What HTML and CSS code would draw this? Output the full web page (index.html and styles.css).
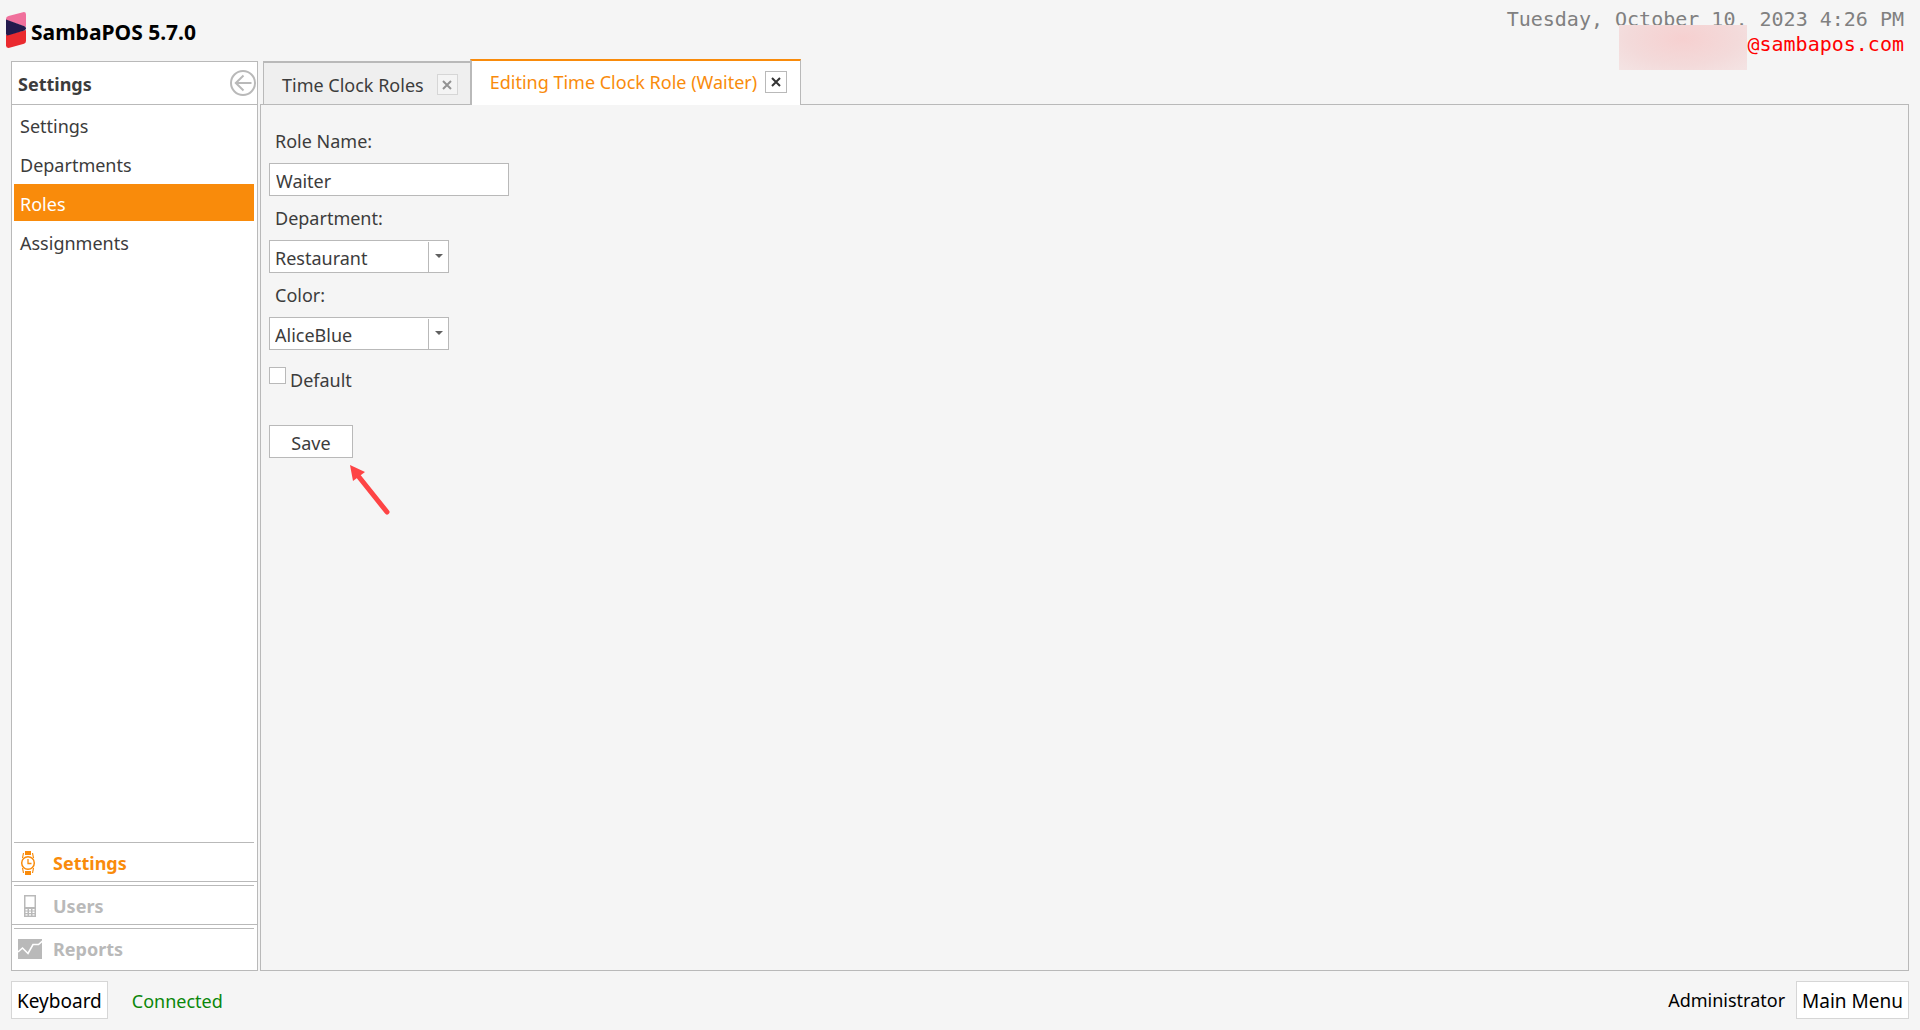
FILE: index.html
```html
<!DOCTYPE html>
<html lang="en">
<head>
<meta charset="utf-8">
<title>SambaPOS 5.7.0</title>
<link rel="stylesheet" href="styles.css">
</head>
<body>
<header class="topbar">
  <div class="brand">
    <svg class="brand-logo" width="20" height="36" viewBox="0 0 20 36" aria-hidden="true">
      <path d="M0 7Q0 4.500 2.500 4L17 .2Q20 -.3 20 2.500V15L0 8Z" fill="#f0709c"/>
      <path d="M0 23L20 18V29Q20 31 18 31.700L3.500 35.800Q0 36.500 0 33.500Z" fill="#ea2a2f"/>
      <path d="M0 7.500L18.500 14.200Q20 15 20 16.200Q20 17.700 18.500 18.400L2.500 23.300Q0 24 0 21.500Z" fill="#231a4c"/>
    </svg>
    <h1 class="brand-name">SambaPOS 5.7.0</h1>
  </div>
  <div class="session">
    <time class="session-date" datetime="2023-10-10T16:26">Tuesday, October 10, 2023 4:26 PM</time>
    <span class="session-mail">@sambapos.com<span class="mail-mask"></span></span>
  </div>
</header>

<main class="workspace">
  <aside class="sidebar">
    <div class="sidebar-head">
      <h2 class="sidebar-title">Settings</h2>
      <button class="back" type="button" aria-label="Back">
        <svg width="26" height="26" viewBox="0 0 26 26" fill="none" stroke="#b9b9b9" stroke-width="2">
          <circle cx="13" cy="13" r="12"/>
          <path d="M21.500 13H6M13.500 5.500L5.800 13L13.500 20.500"/>
        </svg>
      </button>
    </div>
    <nav class="menu">
      <a class="menu-item" href="#settings">Settings</a>
      <a class="menu-item" href="#departments">Departments</a>
      <a class="menu-item selected" href="#roles">Roles</a>
      <a class="menu-item" href="#assignments">Assignments</a>
    </nav>
    <nav class="modules">
      <div class="module">
        <a class="module-link active" href="#module-settings">
          <svg class="module-icon" width="24" height="24" viewBox="0 0 24 24" fill="none" stroke="currentColor">
            <path d="M7 0h6v4H7zM7 20h6v4H7z" fill="currentColor" stroke="none"/>
            <path d="M5.500 2L4.500 7M14.500 2l1 5M5.500 22l-1-5M14.500 22l1-5" stroke-width="1.200"/>
            <circle cx="10" cy="12" r="6.300" stroke-width="1.500"/>
            <path d="M10 8v4.500H13.500" stroke-width="1.300"/>
          </svg>
          Settings
        </a>
      </div>
      <div class="module">
        <a class="module-link" href="#module-users">
          <svg class="module-icon" width="24" height="24" viewBox="0 0 24 24">
            <path fill="currentColor" fill-rule="evenodd" d="M6 1h12v22H6zM7.500 2.500v10.500h9V2.500zM7.500 15v1.500h2V15zM11 15v1.500h2V15zM14.500 15v1.500h2V15zM7.500 17.500V19h2v-1.500zM11 17.500V19h2v-1.500zM14.500 17.500V19h2v-1.500zM7.500 20.200v1.300h2v-1.300zM11 20.200v1.300h2v-1.300zM14.500 20.200v1.300h2v-1.300z"/>
          </svg>
          Users
        </a>
      </div>
      <div class="module">
        <a class="module-link" href="#module-reports">
          <svg class="module-icon" width="24" height="24" viewBox="0 0 24 24">
            <path d="M0 2h24v20H0z" fill="currentColor"/>
            <path d="M0 15l4.500-4 5.500 5.500 5-9h5.500l4-3.500" fill="none" stroke="#fff" stroke-width="1.600"/>
          </svg>
          Reports
        </a>
      </div>
    </nav>
  </aside>

  <section class="content">
    <div class="tabs">
      <div class="tab">
        <a class="tab-link" href="#time-clock-roles">Time Clock Roles</a>
        <button class="tab-close" type="button" aria-label="Close Time Clock Roles">
          <svg width="10" height="10" viewBox="0 0 10 10"><path d="M1 1l8 8M9 1l-8 8" stroke="currentColor" stroke-width="2"/></svg>
        </button>
      </div>
      <div class="tab current">
        <a class="tab-link" href="#editing">Editing Time Clock Role (Waiter)</a>
        <button class="tab-close" type="button" aria-label="Close Editing Time Clock Role">
          <svg width="10" height="10" viewBox="0 0 10 10"><path d="M1 1l8 8M9 1l-8 8" stroke="currentColor" stroke-width="2"/></svg>
        </button>
      </div>
    </div>
    <form class="editor">
      <label class="field-label" for="role-name">Role Name:</label>
      <input class="field text-field" id="role-name" type="text" value="Waiter">
      <label class="field-label" for="department">Department:</label>
      <div class="combo">
        <select class="field select-field" id="department"><option>Restaurant</option></select>
        <span class="combo-arrow"></span>
      </div>
      <label class="field-label" for="color">Color:</label>
      <div class="combo">
        <select class="field select-field" id="color"><option>AliceBlue</option></select>
        <span class="combo-arrow"></span>
      </div>
      <div class="check-row">
        <input class="check" id="default" type="checkbox">
        <label class="check-label" for="default">Default</label>
      </div>
      <div class="actions">
        <button class="save" type="button">Save</button>
        <svg class="pointer" width="42" height="52" viewBox="0 0 42 52" aria-hidden="true">
          <path d="M9 12L37 47" stroke="#fe4445" stroke-width="5" stroke-linecap="round"/>
          <path d="M0 0L15 7L3 16Z" fill="#fe4445"/>
        </svg>
      </div>
    </form>
  </section>
</main>

<footer class="statusbar">
  <button class="bar-button" type="button">Keyboard</button>
  <span class="connection">Connected</span>
  <span class="user">Administrator</span>
  <button class="bar-button" type="button">Main Menu</button>
</footer>
</body>
</html>
```

FILE: styles.css
```css
:root {
  --line: #b9b9b9;
  --accent: #f98b0b;
  --text: #3c3c3c;
  --ui: "Noto Sans", "Open Sans", sans-serif;
}

* {
  box-sizing: border-box;
}

body {
  display: flex;
  flex-direction: column;
  min-height: 100vh;
  margin: 0;
  background: #f5f5f5;
  color: var(--text);
  font-family: var(--ui);
  font-size: 18px;
  line-height: 24px;
}

button,
input,
select {
  margin: 0;
  border-radius: 0;
  color: inherit;
  font: inherit;
}

a {
  color: inherit;
  text-decoration: none;
}

svg {
  display: block;
}

.topbar {
  display: flex;
  justify-content: space-between;
  height: 59px;
  padding: 0 16px 0 6px;
}

.brand {
  display: flex;
  align-items: center;
  gap: 5px;
}

.brand-name {
  margin: 0;
  padding-top: 4px;
  color: #000;
  font-size: 21px;
  line-height: 32px;
}

.session {
  display: flex;
  flex-direction: column;
  align-items: flex-end;
  padding-top: 7px;
  color: #808080;
  font-family: "DejaVu Sans Mono", monospace;
  font-size: 20px;
  line-height: 25px;
}

.session-mail {
  position: relative;
  color: #f00;
}

.mail-mask {
  position: absolute;
  top: -7px;
  right: 100%;
  width: 128px;
  height: 45px;
  background: radial-gradient(ellipse at 50% 30%, #f6d0d0 0%, #f3dada 60%, #f4e4e4 100%);
}

.workspace {
  display: flex;
  flex: 1;
  gap: 2px;
  padding: 0 11px;
}

.sidebar {
  display: flex;
  flex-direction: column;
  width: 247px;
  margin-top: 2px;
  border: 1px solid var(--line);
  background: #fff;
}

.sidebar-head {
  display: flex;
  align-items: center;
  justify-content: space-between;
  height: 43px;
  padding: 0 1px 0 6px;
  border-bottom: 1px solid var(--line);
}

.sidebar-title {
  margin: 0;
  padding-top: 2px;
  font-size: 18px;
}

.back {
  padding: 0;
  border: 0;
  background: none;
}

.menu {
  display: flex;
  flex: 1;
  flex-direction: column;
  gap: 2px;
  padding: 1px 3px 0 2px;
}

.menu-item {
  padding: 8px 6px 5px;
}

.menu-item.selected {
  background: var(--accent);
  color: #fff;
}

.module {
  padding-top: 3px;
  border-bottom: 1px solid var(--line);
}

.module:last-child {
  padding-bottom: 3px;
  border-bottom: 0;
}

.module-link {
  display: flex;
  align-items: center;
  gap: 11px;
  height: 39px;
  margin: 0 3px 0 2px;
  padding: 1px 0 0 4px;
  border-top: 1px solid var(--line);
  color: var(--line);
  font-weight: 700;
}

.module-link.active {
  color: var(--accent);
}

.content {
  display: flex;
  flex: 1;
  flex-direction: column;
}

.tabs {
  display: flex;
  align-items: flex-end;
  padding-left: 3px;
}

.tab {
  display: flex;
  align-items: center;
  gap: 13px;
  height: 43px;
  padding: 2px 12px 0 18px;
  border: 1px solid var(--line);
  border-width: 2px 0 0 1px;
  background: #efefef;
}

.tab.current {
  z-index: 1;
  gap: 8px;
  height: 46px;
  margin-bottom: -1px;
  padding: 0 13px 2px 18px;
  border-width: 2px 1px 0 2px;
  border-top-color: var(--accent);
  background: #fff;
  color: var(--accent);
}

.tab-close {
  display: grid;
  place-items: center;
  width: 21px;
  height: 21px;
  padding: 0;
  border: 1px solid #d6d6d6;
  background: #f4f4f4;
  color: #929292;
}

.tab.current .tab-close {
  width: 22px;
  height: 22px;
  border-color: var(--line);
  background: #fff;
  color: #333;
}

.editor {
  flex: 1;
  padding: 14px 8px;
  border: 1px solid var(--line);
}

.field-label {
  display: block;
  padding: 10px 6px;
}

.field {
  display: block;
  height: 33px;
  padding: 2px 6px 0;
  border: 1px solid var(--line);
  background: #fff;
}

.text-field {
  width: 240px;
}

.combo {
  position: relative;
  width: 180px;
}

.select-field {
  width: 100%;
  padding: 2px 24px 0 5px;
  appearance: none;
}

.combo-arrow {
  position: absolute;
  top: 2px;
  right: 1px;
  bottom: 1px;
  display: grid;
  place-items: center;
  width: 20px;
  padding-bottom: 2px;
  border-left: 1px solid var(--line);
  pointer-events: none;
}

.combo-arrow::before {
  border: 4px solid transparent;
  border-top-color: #606060;
  border-bottom: 0;
  content: "";
}

.check-row {
  display: flex;
  gap: 4px;
  margin-top: 17px;
}

.check {
  width: 17px;
  height: 17px;
  border: 1px solid var(--line);
  background: #fff;
  appearance: none;
}

.check-label {
  padding-top: 1px;
}

.actions {
  position: relative;
  width: 84px;
  margin-top: 33px;
}

.save {
  width: 100%;
  height: 33px;
  padding: 3px 0 0;
  border: 1px solid var(--line);
  background: #fff;
}

.pointer {
  position: absolute;
  top: 40px;
  left: 81px;
}

.statusbar {
  display: flex;
  align-items: center;
  padding: 10px 11px 11px;
  color: #000;
}

.bar-button {
  height: 38px;
  padding: 2px 5px 0;
  border: 1px solid #d6d6d6;
  background: #fff;
  font-size: 19px;
}

.connection {
  margin-left: 24px;
  padding-top: 1px;
  color: #0a870a;
}

.user {
  margin: 0 11px 0 auto;
}
```
